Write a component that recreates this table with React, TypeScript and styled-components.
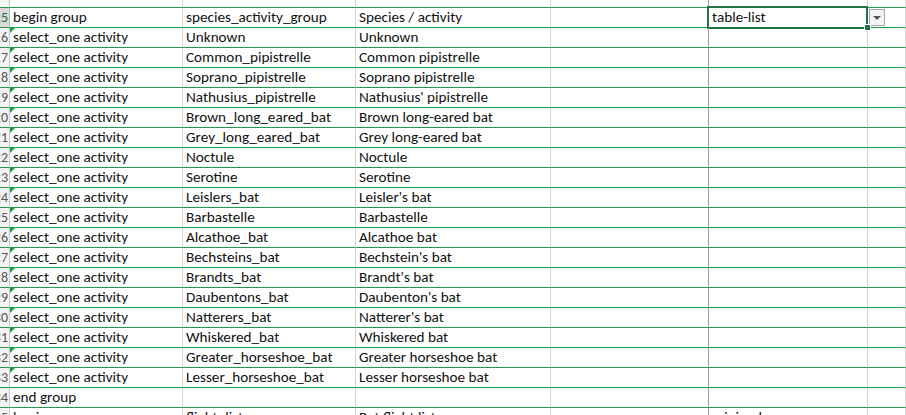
import React from "react";
import styled, { createGlobalStyle } from "styled-components";

const Global = createGlobalStyle`
  html, body { margin: 0; padding: 0; background: #fff; overflow: hidden; }
  body { font-family: Carlito, Lato, "Liberation Sans", sans-serif; }
`;

const Sheet = styled.div`
  width: 906px;
  height: 415px;
  overflow: hidden;
  display: grid;
  grid-template-columns: 10px 173px 173px 195px 158px 159px 1fr;
  grid-template-rows: 8px repeat(21, 20px);
  background: #fff;
`;

const RowHead = styled.div<{ $sel?: boolean }>`
  box-sizing: border-box;
  border-right: 1px solid ${(p) => (p.$sel ? "#9fc7ae" : "#c8c8c8")};
  border-bottom: 1px solid #1f9d4f;
  background: ${(p) => (p.$sel ? "#d9d9d9" : "#f4f4f4")};
  color: ${(p) => (p.$sel ? "#217346" : "#555")};
  font-size: 14px;
  display: flex;
  justify-content: flex-end;
  align-items: flex-end;
  padding: 0 1px 1px 0;
  overflow: hidden;
  white-space: nowrap;
  line-height: 16px;
`;

const Cell = styled.div<{ $dark?: boolean }>`
  position: relative;
  box-sizing: border-box;
  border-right: 1px solid ${(p) => (p.$dark ? "#9e9e9e" : "#d4d4d4")};
  border-bottom: 1px solid #1f9d4f;
  font-size: 15.2px;
  color: #111;
  padding: 0 0 1px 3px;
  display: flex;
  align-items: flex-end;
  white-space: nowrap;
  line-height: 17px;
`;

const Flag = styled.span`
  position: absolute;
  left: 0;
  top: 0;
  width: 0;
  height: 0;
  border-top: 5px solid #14a33a;
  border-right: 5px solid transparent;
`;

const Selection = styled.span`
  position: absolute;
  left: -2px;
  top: -2px;
  width: 161px;
  height: 23px;
  box-sizing: border-box;
  border: 2px solid #217346;
  pointer-events: none;
`;

const FillHandle = styled.span`
  position: absolute;
  right: -4px;
  bottom: -4px;
  width: 5px;
  height: 5px;
  background: #217346;
  border: 1px solid #fff;
  z-index: 3;
`;

const DropButton = styled.span`
  position: absolute;
  left: 160px;
  top: 1px;
  width: 16px;
  height: 17px;
  box-sizing: border-box;
  border: 1px solid #a9a9a9;
  background: #f3f3f3;
  display: flex;
  align-items: center;
  justify-content: center;
  z-index: 2;
`;

const Tri = styled.span`
  width: 0;
  height: 0;
  border-left: 4px solid transparent;
  border-right: 4px solid transparent;
  border-top: 4px solid #555;
`;

const Text = styled.span`
  position: relative;
  z-index: 1;
`;

type Row = [string, string, string, string?, string?];

const species: [string, string][] = [
  ["Unknown", "Unknown"],
  ["Common_pipistrelle", "Common pipistrelle"],
  ["Soprano_pipistrelle", "Soprano pipistrelle"],
  ["Nathusius_pipistrelle", "Nathusius' pipistrelle"],
  ["Brown_long_eared_bat", "Brown long-eared bat"],
  ["Grey_long_eared_bat", "Grey long-eared bat"],
  ["Noctule", "Noctule"],
  ["Serotine", "Serotine"],
  ["Leislers_bat", "Leisler's bat"],
  ["Barbastelle", "Barbastelle"],
  ["Alcathoe_bat", "Alcathoe bat"],
  ["Bechsteins_bat", "Bechstein's bat"],
  ["Brandts_bat", "Brandt's bat"],
  ["Daubentons_bat", "Daubenton's bat"],
  ["Natterers_bat", "Natterer's bat"],
  ["Whiskered_bat", "Whiskered bat"],
  ["Greater_horseshoe_bat", "Greater horseshoe bat"],
  ["Lesser_horseshoe_bat", "Lesser horseshoe bat"],
];

const rows: Row[] = [
  ["", "", ""],
  ["begin group", "species_activity_group", "Species / activity", "", "table-list"],
  ...species.map(([a, b]) => ["select_one activity", a, b] as Row),
  ["end group", "", ""],
  ["begin group", "flight_list", "Bat flight list", "", "minimal"],
];

export default function App() {
  return (
    <>
      <Global />
      <Sheet>
        {rows.map((r, i) => {
          const num = 14 + i;
          const flagged = r[0] === "select_one activity";
          const selRow = i === 1;
          return (
            <React.Fragment key={i}>
              <RowHead $sel={selRow}>{i === 0 ? "" : num}</RowHead>
              <Cell>
                {flagged && <Flag />}
                <Text>{r[0]}</Text>
              </Cell>
              <Cell>
                <Text>{r[1]}</Text>
              </Cell>
              <Cell>
                <Text>{r[2]}</Text>
              </Cell>
              <Cell $dark>
                <Text>{r[3] ?? ""}</Text>
              </Cell>
              <Cell>
                <Text>{r[4] ?? ""}</Text>
                {selRow && (
                  <>
                    <Selection />
                    <FillHandle />
                    <DropButton>
                      <Tri />
                    </DropButton>
                  </>
                )}
              </Cell>
              <Cell />
            </React.Fragment>
          );
        })}
      </Sheet>
    </>
  );
}
